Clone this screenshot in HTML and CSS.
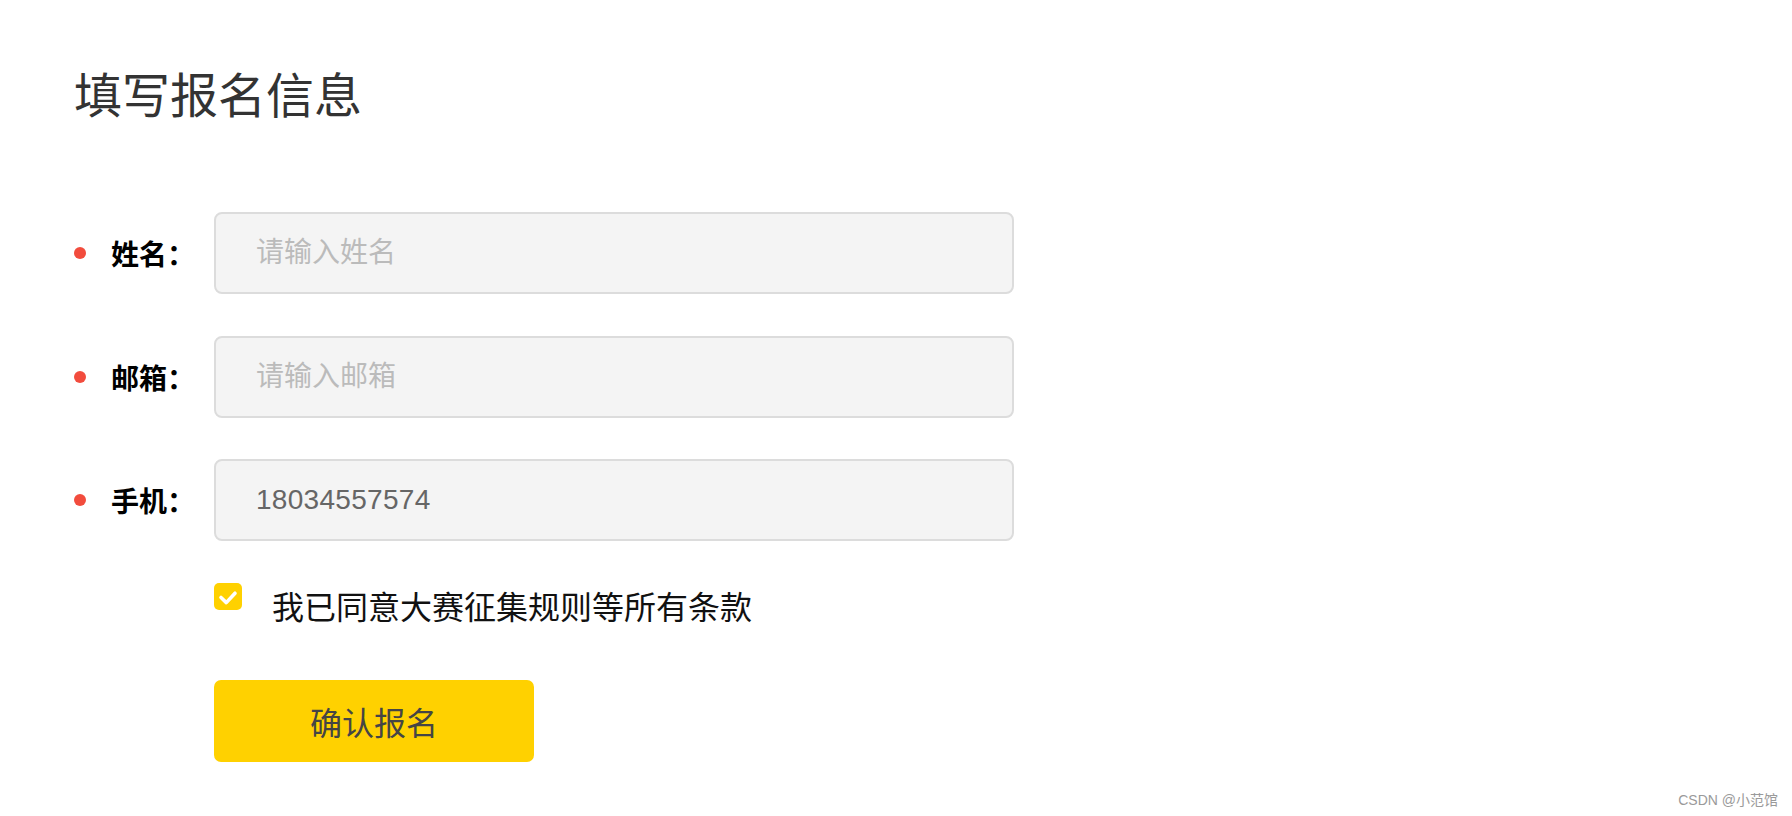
FILE: index.html
```html
<!DOCTYPE html>
<html lang="zh-CN">
<head>
<meta charset="utf-8">
<title>填写报名信息</title>
<link rel="stylesheet" href="styles.css">
</head>
<body>
<div class="page">
  <h1 class="title">填写报名信息</h1>
  <form class="form">
    <div class="row">
      <span class="dot"></span>
      <label class="label">姓名：</label>
      <input class="field" type="text" placeholder="请输入姓名">
    </div>
    <div class="row">
      <span class="dot"></span>
      <label class="label">邮箱：</label>
      <input class="field" type="text" placeholder="请输入邮箱">
    </div>
    <div class="row">
      <span class="dot"></span>
      <label class="label">手机：</label>
      <input class="field" type="text" value="18034557574">
    </div>
    <div class="agree">
      <span class="checkbox">
        <svg viewBox="0 0 28 28" width="28" height="28"><polyline points="7,14.5 12.3,19.6 21,10.2" fill="none" stroke="#fff" stroke-width="3.6" stroke-linecap="round" stroke-linejoin="round"/></svg>
      </span>
      <span class="agree-text">我已同意大赛征集规则等所有条款</span>
    </div>
    <button class="submit" type="button">确认报名</button>
  </form>
</div>
<div class="watermark">CSDN @小范馆</div>
</body>
</html>
```

FILE: styles.css
```css
html, body {
  margin: 0;
  padding: 0;
  background: #fff;
}
body {
  font-family: "Noto Sans CJK SC", "Noto Sans", sans-serif;
  color: #000;
  width: 1792px;
  height: 816px;
  overflow: hidden;
}
.page {
  padding: 68px 0 0 74px;
}
.title {
  margin: 0;
  font-size: 48px;
  line-height: 48px;
  font-weight: 400;
  color: #333;
}
.form {
  margin-top: 96px;
  display: flex;
  flex-direction: column;
  align-items: flex-start;
}
.row {
  display: flex;
  align-items: center;
  height: 82px;
  margin-bottom: 41.5px;
}
.row:nth-child(3) {
  margin-bottom: 42px;
}
.dot {
  width: 12px;
  height: 12px;
  border-radius: 50%;
  background: #f24c3d;
  margin-right: 25px;
}
.label {
  width: 103px;
  font-size: 28px;
  font-weight: 700;
  line-height: 40px;
  color: #000;
}
.field {
  box-sizing: border-box;
  width: 800px;
  height: 82px;
  margin: 0;
  padding: 0 0 0 40px;
  border: 2px solid #dcdcdc;
  border-radius: 8px;
  background: #f4f4f4;
  font-family: "Liberation Sans", "Noto Sans CJK SC", sans-serif;
  font-size: 28px;
  letter-spacing: 0.3px;
  color: #666;
  outline: none;
}
.field::placeholder {
  color: #bbbbbb;
  letter-spacing: 0;
  font-family: "Noto Sans CJK SC", sans-serif;
}
.agree {
  display: flex;
  align-items: flex-start;
  margin-left: 140px;
  height: 44px;
}
.checkbox {
  width: 28px;
  height: 27px;
  border-radius: 5px;
  background: #ffd100;
  display: flex;
  overflow: hidden;
}
.checkbox svg {
  display: block;
}
.agree-text {
  margin-left: 30px;
  font-size: 32px;
  line-height: 44px;
  color: #111;
}
.submit {
  margin: 53px 0 0 140px;
  width: 320px;
  height: 82px;
  border: none;
  border-radius: 7px;
  background: #ffd100;
  font-family: "Noto Sans CJK SC", sans-serif;
  font-size: 32px;
  color: #454545;
  padding: 0;
}
.watermark {
  position: absolute;
  right: 14px;
  bottom: 8px;
  font-family: "Liberation Sans", "Noto Sans CJK SC", sans-serif;
  font-size: 14px;
  line-height: 16px;
  color: #9a9a9a;
}
```
